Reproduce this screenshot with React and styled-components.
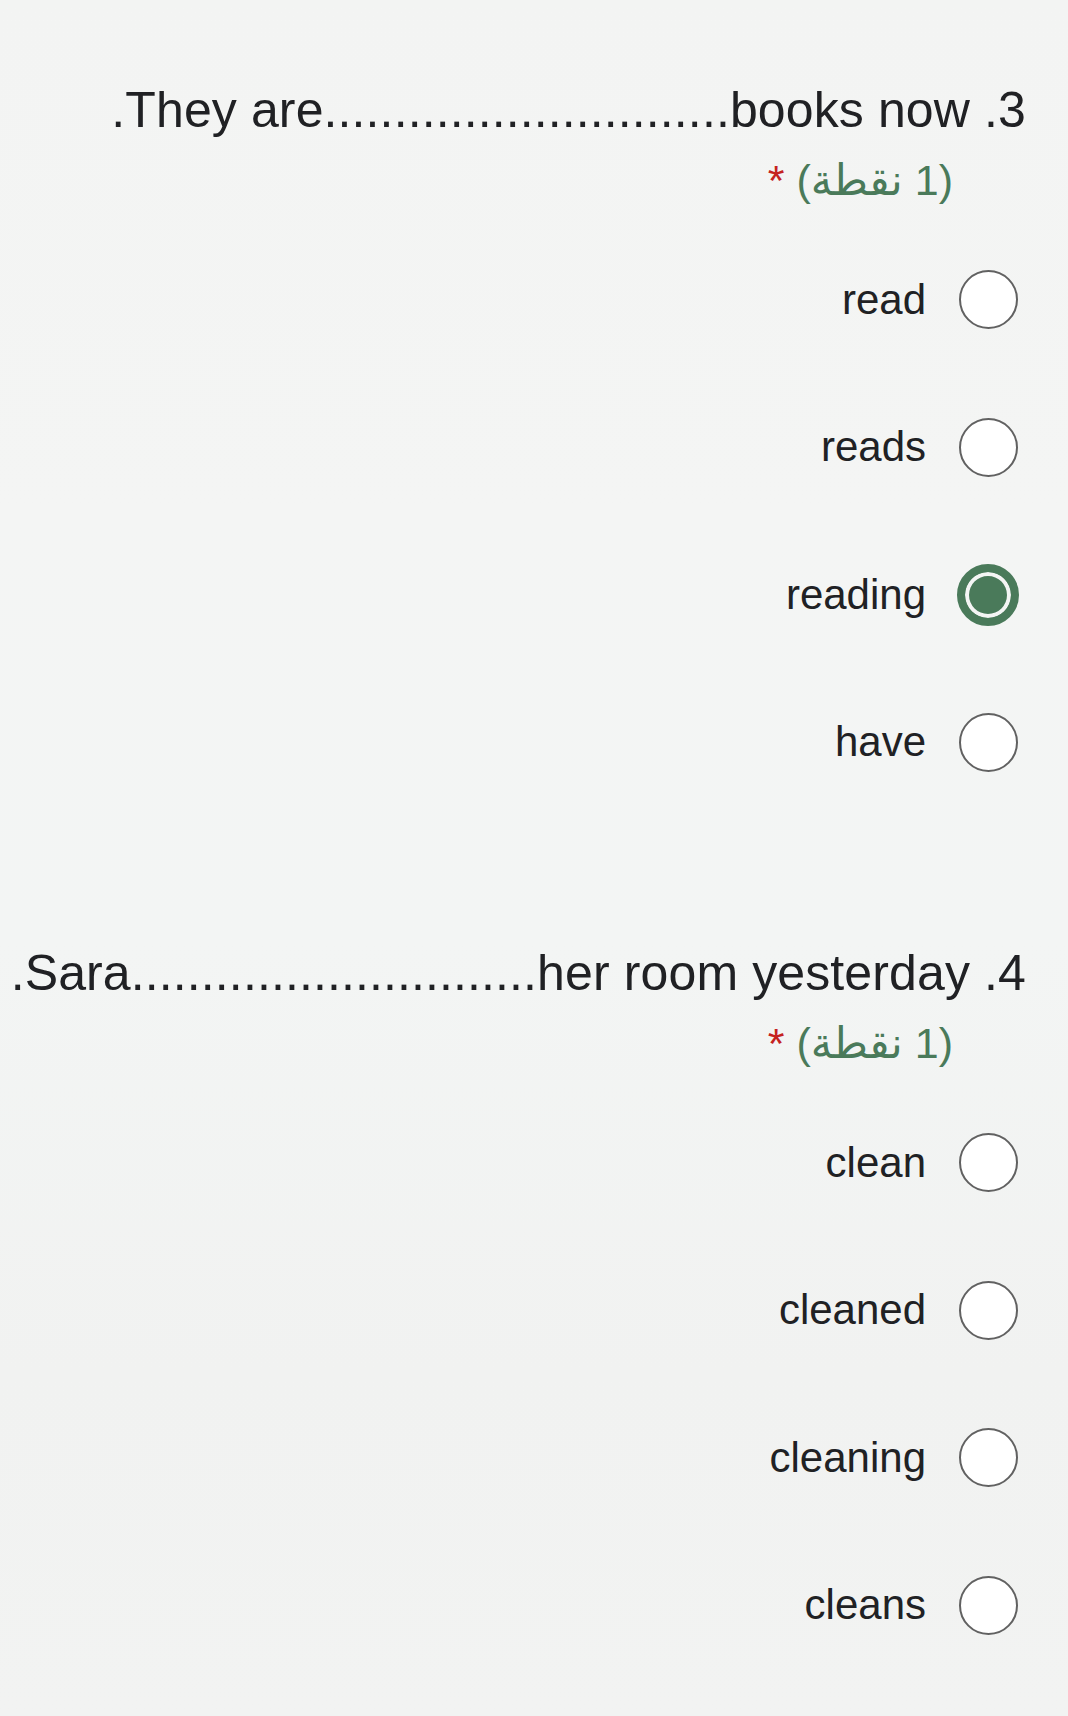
import React from 'react'
import styled, { createGlobalStyle } from 'styled-components'

const GlobalStyle = createGlobalStyle`
  html, body {
    margin: 0;
    padding: 0;
  }
  body {
    background: linear-gradient(180deg, #f3f4f3 0%, #f4f5f4 30%, #f3f5f4 55%, #f1f2f1 80%, #f2f3f2 100%);
    font-family: "Liberation Sans", "DejaVu Sans", Arial, sans-serif;
    color: #202124;
  }
`

const Page = styled.main`
  direction: rtl;
  width: 1068px;
  min-height: 1716px;
  box-sizing: border-box;
  padding-top: 80px;
  display: flex;
  flex-direction: column;
  gap: 127px;
`

const Question = styled.section`
  display: flex;
  flex-direction: column;
`

const Title = styled.h2`
  margin: 0;
  padding-right: 42px;
  font-size: 50px;
  line-height: 60px;
  font-weight: 400;
  letter-spacing: 0.12px;
  white-space: nowrap;
`

const Points = styled.div`
  margin-top: 14px;
  padding-right: 115px;
  font-size: 43px;
  line-height: 52px;
  color: #4a7a5a;
`

const Star = styled.span`
  color: #c5221f;
`

const Options = styled.div`
  margin-top: 20px;
  display: flex;
  flex-direction: column;
  padding-right: 49px;
`

const Row = styled.label`
  height: 147.5px;
  display: flex;
  align-items: center;
  gap: 31px;
`

const RadioBox = styled.span`
  width: 62px;
  height: 62px;
  display: flex;
  align-items: center;
  justify-content: center;
  flex: none;
`

const Circle = styled.span`
  box-sizing: border-box;
  border-radius: 50%;
  width: ${p => (p.checked ? 62 : 59)}px;
  height: ${p => (p.checked ? 62 : 59)}px;
  border: ${p => (p.checked ? '8px solid #4a7a5a' : '2.5px solid #616161')};
  background: ${p => (p.checked ? '#4a7a5a' : '#fff')};
  box-shadow: ${p => (p.checked ? 'inset 0 0 0 4px #f4f5f4' : 'none')};
`

const Label = styled.span`
  font-size: 42px;
  line-height: 50px;
  direction: ltr;
`

const dots = '.'.repeat(29)

const questions = [
  {
    title: `3. They are${dots}books now.`,
    options: ['read', 'reads', 'reading', 'have'],
    checked: 'reading'
  },
  {
    title: `4. Sara${dots}her room yesterday.`,
    options: ['clean', 'cleaned', 'cleaning', 'cleans'],
    checked: null
  }
]

const App = () => (
  <>
    <GlobalStyle />
    <Page>
      {questions.map(q => (
        <Question key={q.title}>
          <Title>{q.title}</Title>
          <Points>(1 نقطة)<Star> *</Star></Points>
          <Options>
            {q.options.map(o => (
              <Row key={o}>
                <RadioBox>
                  <Circle checked={o === q.checked} />
                </RadioBox>
                <Label>{o}</Label>
              </Row>
            ))}
          </Options>
        </Question>
      ))}
    </Page>
  </>
)

export default App
